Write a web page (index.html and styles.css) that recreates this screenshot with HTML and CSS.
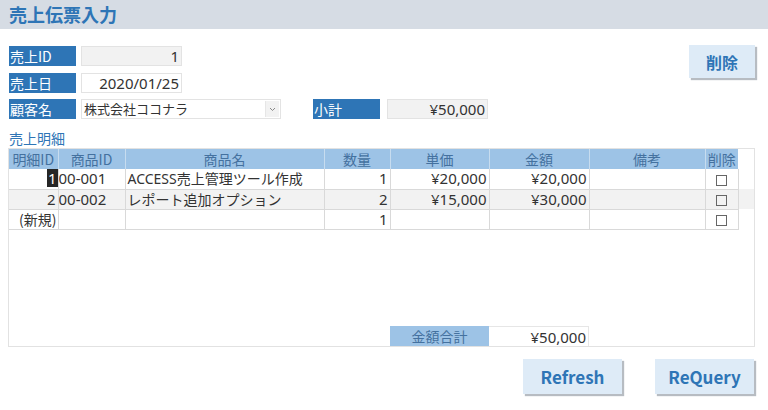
FILE: index.html
```html
<!DOCTYPE html>
<html lang="ja">
  <head>
    <meta charset="UTF-8" />
    <meta name="viewport" content="width=device-width, initial-scale=1.0" />
    <title>売上伝票入力</title>
    <link rel="stylesheet" href="styles.css">
  </head>
  <body>
    <header class="titleBar">売上伝票入力</header>
    <main>
      <div class="topArea">
        <div class="fieldRows">
          <div class="fieldRow">
            <span class="fieldLabel">売上ID</span>
            <span class="fieldBox readOnly alignRight">1</span>
          </div>
          <div class="fieldRow">
            <span class="fieldLabel">売上日</span>
            <span class="fieldBox alignRight">2020/01/25</span>
          </div>
          <div class="fieldRow">
            <span class="fieldLabel">顧客名</span>
            <span class="fieldBox comboBox">
              株式会社ココナラ
              <span class="comboArrow">
                <svg width="7" height="5" viewBox="0 0 7 5"><path d="M1 1 L3.5 3.5 L6 1" fill="none" stroke="#888" stroke-width="1"/></svg>
              </span>
            </span>
            <span class="fieldLabel subtotalLabel">小計</span>
            <span class="fieldBox readOnly alignRight">¥50,000</span>
          </div>
        </div>
        <button type="button" class="actionButton deleteButton">削除</button>
      </div>

      <div class="sectionTitle">売上明細</div>
      <div class="detailBox">
        <table class="detailTable">
          <colgroup>
            <col style="width: 49px" />
            <col style="width: 67px" />
            <col style="width: 199px" />
            <col style="width: 66px" />
            <col style="width: 99px" />
            <col style="width: 100px" />
            <col style="width: 116px" />
            <col style="width: 33px" />
            <col />
          </colgroup>
          <thead>
            <tr>
              <th>明細ID</th>
              <th>商品ID</th>
              <th>商品名</th>
              <th>数量</th>
              <th>単価</th>
              <th>金額</th>
              <th>備考</th>
              <th class="narrowHead">削除</th>
              <th class="filler"></th>
            </tr>
          </thead>
          <tbody>
            <tr>
              <td class="num"><span class="cursorCell">1</span></td>
              <td class="code">00-001</td>
              <td>ACCESS売上管理ツール作成</td>
              <td class="num">1</td>
              <td class="num">¥20,000</td>
              <td class="num">¥20,000</td>
              <td></td>
              <td class="check"><span class="checkBox"></span></td>
              <td class="filler"></td>
            </tr>
            <tr class="altRow">
              <td class="num">2</td>
              <td class="code">00-002</td>
              <td>レポート追加オプション</td>
              <td class="num">2</td>
              <td class="num">¥15,000</td>
              <td class="num">¥30,000</td>
              <td></td>
              <td class="check"><span class="checkBox"></span></td>
              <td class="filler"></td>
            </tr>
            <tr>
              <td class="newRow">(新規)</td>
              <td></td>
              <td></td>
              <td class="num">1</td>
              <td></td>
              <td></td>
              <td></td>
              <td class="check"><span class="checkBox"></span></td>
              <td class="filler"></td>
            </tr>
          </tbody>
        </table>
        <div class="totalRow">
          <span class="totalLabel">金額合計</span>
          <span class="totalValue">¥50,000</span>
        </div>
      </div>

      <div class="bottomButtons">
        <button type="button" class="actionButton wideButton">Refresh</button>
        <button type="button" class="actionButton wideButton">ReQuery</button>
      </div>
    </main>
  </body>
</html>
```

FILE: styles.css
```css
html {
  box-sizing: border-box;
  font-family: "Noto Sans", "Noto Sans CJK JP", sans-serif;
}

*,
*:before,
*:after {
  box-sizing: inherit;
}

body {
  margin: 0;
  padding: 0;
  background-color: #fff;
  color: #333;
  font-size: 14px;
  width: 768px;
  height: 410px;
  overflow: hidden;
}

.titleBar {
  height: 29px;
  background-color: #d6dce4;
  color: #2e75b6;
  font-family: "Noto Sans CJK JP", sans-serif;
  font-weight: bold;
  font-size: 18px;
  line-height: 28px;
  padding-left: 9px;
}

main {
  padding: 0 0 0 8px;
}

.topArea {
  display: flex;
  justify-content: space-between;
  align-items: flex-start;
  padding-top: 17px;
  padding-right: 13px;
}

.fieldRows {
  display: flex;
  flex-direction: column;
  gap: 6.5px;
  padding-left: 1px;
}

.fieldRow {
  display: flex;
  align-items: center;
  height: 20px;
}

.fieldLabel {
  width: 67px;
  height: 20px;
  line-height: 20px;
  background-color: #2e75b6;
  color: #fff;
  padding-left: 1px;
  margin-right: 5px;
  font-family: "Noto Sans CJK JP", sans-serif;
}

.subtotalLabel {
  margin-left: 32px;
  margin-right: 7px;
}

.fieldBox {
  width: 101px;
  height: 20px;
  line-height: 18px;
  border: 1px solid #e3e3e3;
  background-color: #fff;
  padding: 0 2px;
  color: #333;
  font-size: 15px;
}

.readOnly {
  background-color: #f2f2f2;
}

.alignRight {
  text-align: right;
}

.comboBox {
  width: 200px;
  position: relative;
  font-family: "Noto Sans CJK JP", sans-serif;
  font-size: 13px;
}

.comboArrow {
  position: absolute;
  right: 1px;
  top: 1px;
  width: 14px;
  height: 16px;
  background-color: #f2f2f2;
  border-left: 1px solid #e6e6e6;
  display: flex;
  align-items: center;
  justify-content: center;
}

.actionButton {
  border: none;
  background-color: #deebf7;
  color: #2e75b6;
  font-family: "Noto Sans CJK JP", "Noto Sans", sans-serif;
  font-weight: bold;
  box-shadow: 2px 2px 1px #b7bcc2;
  cursor: pointer;
  padding: 0;
}

.deleteButton {
  width: 66px;
  height: 33px;
  font-size: 16px;
  margin-top: -1px;
}

.sectionTitle {
  color: #2e75b6;
  font-family: "Noto Sans CJK JP", sans-serif;
  margin-top: 11px;
  padding-left: 1px;
  height: 18px;
  line-height: 17px;
}

.detailBox {
  width: 747px;
  height: 199px;
  border: 1px solid #e2e2e2;
  display: flex;
  flex-direction: column;
  justify-content: space-between;
}

.detailTable {
  border-collapse: collapse;
  table-layout: fixed;
  width: 100%;
}

.detailTable th {
  background-color: #9dc3e6;
  color: #44719f;
  font-weight: normal;
  height: 20px;
  padding: 0;
  border-right: 1px solid #c7dcef;
  font-family: "Noto Sans CJK JP", sans-serif;
  white-space: nowrap;
  line-height: 19px;
}

.detailTable th.narrowHead {
  border-right: none;
}

.detailTable td {
  height: 20px;
  padding: 0 2px;
  border-right: 1px solid #d9d9d9;
  border-bottom: 1px solid #d9d9d9;
  white-space: nowrap;
  overflow: hidden;
  font-family: "Noto Sans", "Noto Sans CJK JP", sans-serif;
  line-height: 19px;
}

.detailTable .filler {
  background-color: #fff;
  border: none;
}

.altRow td,
.altRow td.filler {
  background-color: #f2f2f2;
}

.detailTable td.num {
  text-align: right;
  font-size: 15px;
}

.detailTable td.code {
  padding-left: 0;
  font-size: 15px;
}

.detailTable td.newRow {
  text-align: right;
  padding-right: 1px;
  font-family: "Noto Sans CJK JP", sans-serif;
}

.cursorCell {
  display: inline-block;
  background-color: #262626;
  color: #fff;
  height: 18px;
  line-height: 18px;
  padding: 0 1px;
  margin-right: -2px;
  vertical-align: top;
}

.detailTable td.check {
  text-align: center;
}

.checkBox {
  display: inline-block;
  width: 11px;
  height: 11px;
  border: 1px solid #666;
  vertical-align: middle;
}

.totalRow {
  display: flex;
  padding-left: 381px;
}

.totalLabel {
  width: 99px;
  height: 20px;
  line-height: 20px;
  background-color: #9dc3e6;
  color: #44719f;
  text-align: center;
  font-family: "Noto Sans CJK JP", sans-serif;
}

.totalValue {
  width: 100px;
  height: 20px;
  line-height: 20px;
  text-align: right;
  padding-right: 2px;
  font-size: 15px;
  border-top: 1px solid #e6e6e6;
  border-right: 1px solid #e6e6e6;
}

.bottomButtons {
  display: flex;
  justify-content: flex-end;
  gap: 33px;
  padding-top: 12px;
  padding-right: 14px;
}

.wideButton {
  width: 99px;
  height: 35px;
  font-size: 17px;
}
```
